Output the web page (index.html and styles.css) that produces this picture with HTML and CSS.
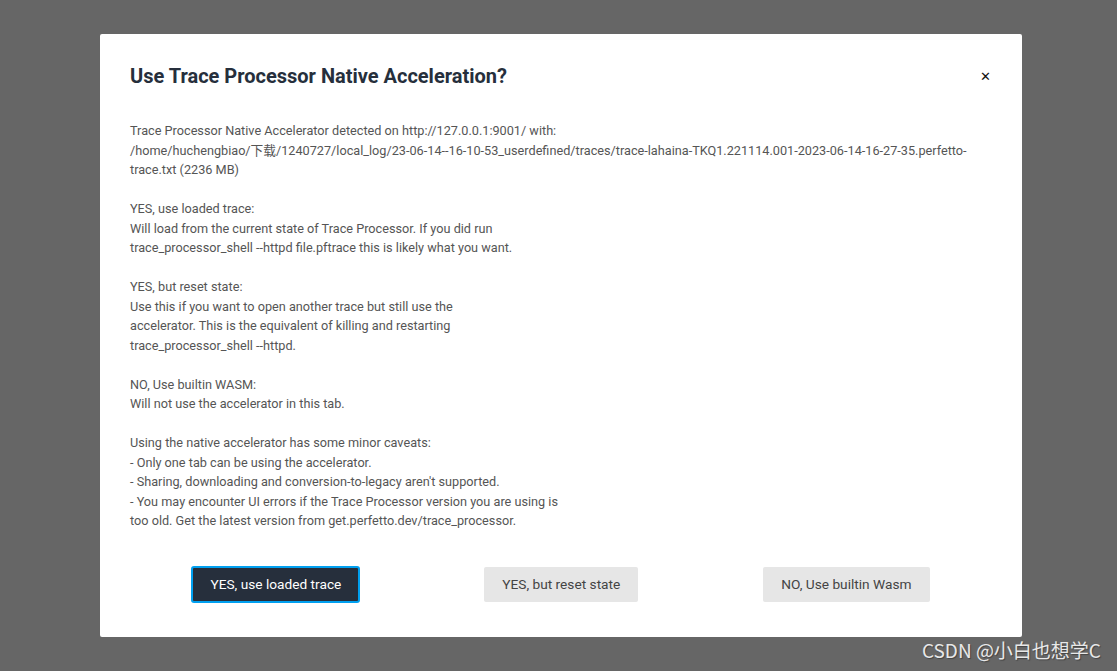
FILE: index.html
```html
<!DOCTYPE html>
<html>
<head>
<meta charset="utf-8">
<link rel="stylesheet" href="styles.css">
</head>
<body>
<div class="overlay">
  <div class="modal">
    <header class="modal-header">
      <h1 class="modal-title">Use Trace Processor Native Acceleration?</h1>
      <button class="close">&#x2715;</button>
    </header>
    <main class="modal-body">Trace Processor Native Accelerator detected on http://127.0.0.1:9001/ with:
/home/huchengbiao/下载/1240727/local_log/23-06-14--16-10-53_userdefined/traces/trace-lahaina-TKQ1.221114.001-2023-06-14-16-27-35.perfetto-trace.txt (2236 MB)

YES, use loaded trace:
Will load from the current state of Trace Processor. If you did run
trace_processor_shell --httpd file.pftrace this is likely what you want.

YES, but reset state:
Use this if you want to open another trace but still use the
accelerator. This is the equivalent of killing and restarting
trace_processor_shell --httpd.

NO, Use builtin WASM:
Will not use the accelerator in this tab.

Using the native accelerator has some minor caveats:
- Only one tab can be using the accelerator.
- Sharing, downloading and conversion-to-legacy aren't supported.
- You may encounter UI errors if the Trace Processor version you are using is
too old. Get the latest version from get.perfetto.dev/trace_processor.</main>
    <footer class="modal-footer">
      <button class="btn primary">YES, use loaded trace</button>
      <button class="btn">YES, but reset state</button>
      <button class="btn">NO, Use builtin Wasm</button>
    </footer>
  </div>
</div>
<div class="watermark">CSDN @小白也想学C</div>
</body>
</html>
```
FILE: styles.css
```css
html, body {
  margin: 0;
  padding: 0;
  height: 100%;
}
body {
  background: #666666;
  font-family: Roboto, "Noto Sans CJK SC", sans-serif;
  overflow: hidden;
}
.overlay {
  display: flex;
  padding-top: 34px;
  padding-left: 100px;
}
.modal {
  width: 922px;
  height: 603px;
  box-sizing: border-box;
  background: #fff;
  border-radius: 2px;
  padding: 30px 30px 0 30px;
  display: flex;
  flex-direction: column;
}
.modal-header {
  display: flex;
  justify-content: space-between;
  align-items: center;
  height: 24px;
}
.modal-title {
  margin: 0;
  font-size: 20px;
  font-weight: 700;
  color: #262f3c;
}
.close {
  border: none;
  background: none;
  font-size: 13px;
  font-weight: 700;
  color: #111;
  padding: 0;
  margin-right: 1px;
  font-family: "DejaVu Sans", sans-serif;
}
.modal-body {
  margin-top: 33px;
  white-space: pre-line;
  font-size: 12.7px;
  line-height: 19.5px;
  color: #555;
}
.modal-footer {
  margin-top: 36px;
  display: flex;
  justify-content: space-around;
}
.btn {
  font-family: Roboto, sans-serif;
  font-size: 13.7px;
  height: 35px;
  padding: 0 18px;
  background: #e6e6e6;
  color: #444;
  border: none;
  border-radius: 2px;
}
.btn.primary {
  background: #262f3c;
  color: #fff;
  outline: 2px solid #00a0f0;
  outline-offset: -1px;
}
.watermark {
  position: absolute;
  right: 16px;
  bottom: 8px;
  font-family: "Noto Sans CJK SC", sans-serif;
  font-size: 19px;
  color: #e8e8e8;
  text-shadow: 1px 1px 1px rgba(0,0,0,0.35);
}
```
